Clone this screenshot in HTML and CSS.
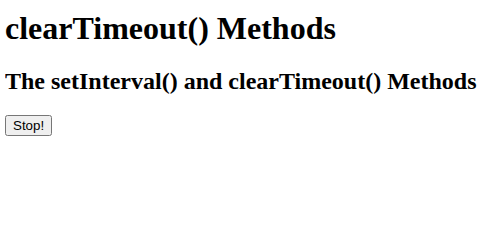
FILE: index.html
```html
<!DOCTYPE html>
<html>
<head>
<meta charset="utf-8">
<link rel="stylesheet" href="styles.css">
</head>
<body class="page">
<h1 class="title">clearTimeout() Methods</h1>
<h2 class="subtitle">The setInterval() and clearTimeout() Methods</h2>
<button class="stop-btn">Stop!</button>
</body>
</html>
```

FILE: styles.css
```css
.page {
  margin: 5px;
  font-family: "Liberation Serif", serif;
  background: #fff;
  color: #000;
}
.title {
  font-size: 32px;
  margin: 5px 0 21.44px;
}
.subtitle {
  font-size: 24px;
  margin: 19.92px 0;
}
.stop-btn {
  font-family: "Liberation Sans", Arial, sans-serif;
  font-size: 13.333px;
}
```
